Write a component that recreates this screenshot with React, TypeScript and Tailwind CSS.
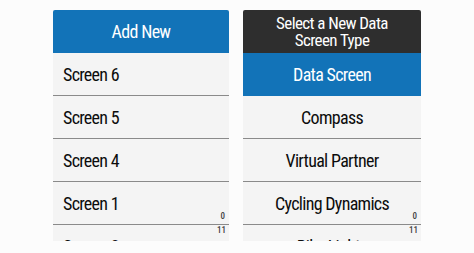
const font = { fontFamily: "'Roboto Condensed', 'Liberation Sans Narrow', 'DejaVu Sans Condensed', Roboto, sans-serif" };

const leftRows = ["Screen 6", "Screen 5", "Screen 4", "Screen 1", "Screen 2"];
const rightRows = ["Compass", "Virtual Partner", "Cycling Dynamics", "Bike Lights"];

function Row({ label, center }: { label: string; center?: boolean }) {
  return (
    <div
      className={`h-[43px] shrink-0 border-b border-[#8a8a8a] flex items-center text-[18px] tracking-[-0.7px] text-[#0c0c0c] ${
        center ? "justify-center" : "pl-[10px]"
      }`}
    >
      {label}
    </div>
  );
}

function Scroll() {
  return (
    <div className="absolute right-[3px] top-[199px] flex flex-col items-end text-[9px] leading-[14px] font-medium text-[#444]">
      <span className="pr-[1px]">0</span>
      <span>11</span>
    </div>
  );
}

export default function App() {
  return (
    <div className="w-[474px] h-[253px] bg-[#fcfcfc] flex gap-[14px] pl-[53px] pt-[10px]" style={font}>
      <div className="relative w-[176px] h-[231px] bg-[#f4f4f4] overflow-hidden flex flex-col">
        <div className="h-[43px] shrink-0 bg-[#1273b8] rounded-t-[2px] flex items-center justify-center text-white text-[18px] tracking-[-0.7px]">
          Add New
        </div>
        {leftRows.map((r) => (
          <Row key={r} label={r} />
        ))}
        <Scroll />
      </div>
      <div className="relative w-[178px] h-[231px] bg-[#f4f4f4] overflow-hidden flex flex-col">
        <div className="h-[43px] shrink-0 bg-[#2e2e2e] rounded-t-[2px] flex flex-col items-center justify-center text-white text-[17px] leading-[17px] tracking-[-0.6px]">
          <span>Select a New Data</span>
          <span>Screen Type</span>
        </div>
        <div className="h-[43px] shrink-0 bg-[#1273b8] flex items-center justify-center text-white text-[18px] tracking-[-0.7px]">
          Data Screen
        </div>
        {rightRows.map((r) => (
          <Row key={r} label={r} center />
        ))}
        <Scroll />
      </div>
    </div>
  );
}
